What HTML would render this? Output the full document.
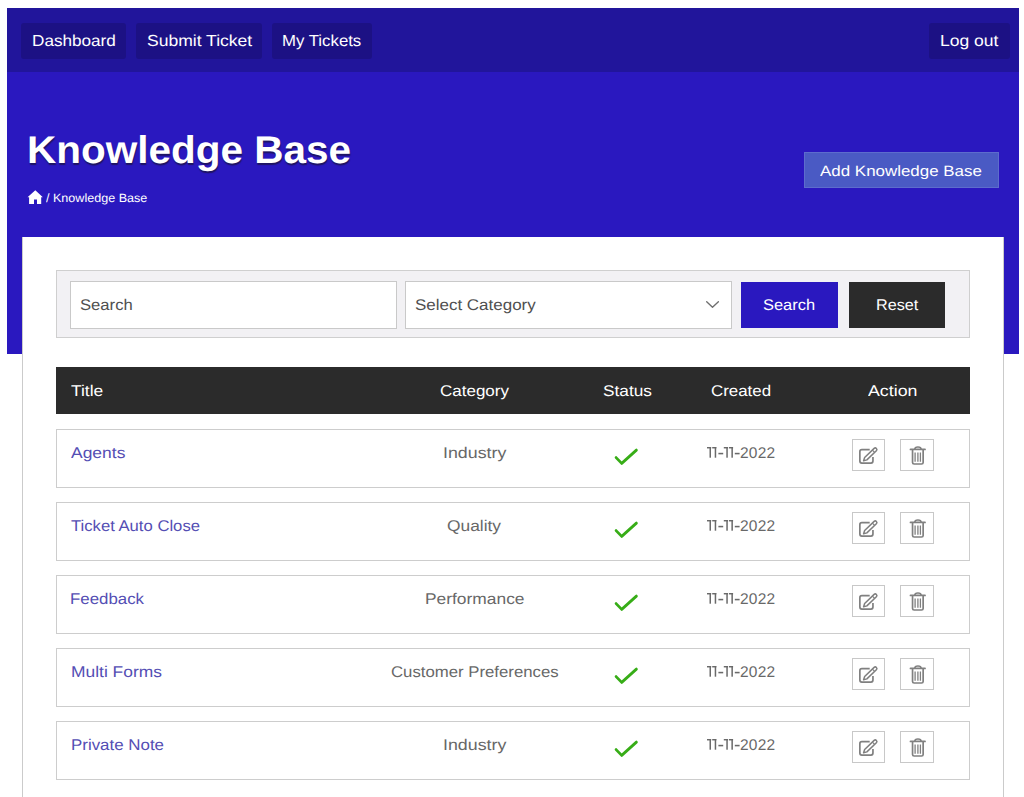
<!DOCTYPE html>
<html><head><meta charset="utf-8"><style>
*{box-sizing:border-box;margin:0;padding:0}
html,body{width:1024px;height:797px;overflow:hidden;background:#fff;font-family:"Liberation Sans",sans-serif;text-rendering:geometricPrecision}
.a{position:absolute}
.t{position:absolute;white-space:nowrap;line-height:1}
.nb{position:absolute;top:23px;height:36px;background:#1c1184;border-radius:3px}
.row{position:absolute;left:56px;width:914px;height:59px;border:1px solid #cdcdcd;background:#fff}
.ab{position:absolute;top:9px;width:33px;height:32px;border:1px solid #c8c8c8;background:#fff}
</style></head><body>
<div class="a" style="left:7px;top:8px;width:1012px;height:64px;background:#21159b"></div>
<div class="a" style="left:7px;top:72px;width:1012px;height:282px;background:#2a18bf"></div>
<div class="nb" style="left:21px;width:105px"></div>
<div class="nb" style="left:136px;width:126px"></div>
<div class="nb" style="left:272px;width:100px"></div>
<div class="nb" style="left:929px;width:81px"></div>
<svg class="a" style="left:27px;top:190px" width="17" height="15" viewBox="0 0 17 15"><path d="M8.3 0.3 L15.6 6.9 Q15.9 7.3 15.4 7.3 H14.2 V14 H10 V9.6 H7 V14 H2.1 V7.3 H0.9 Q0.4 7.3 0.8 6.9 Z" fill="#fff"/></svg>
<div class="a" style="left:804px;top:152px;width:195px;height:36px;background:#4a5ac4;border:1px solid #5d6ccd"></div>
<div class="a" style="left:22px;top:237px;width:982px;height:600px;background:#fff;border-left:1px solid #cbcbcb;border-right:1px solid #cbcbcb"></div>
<div class="a" style="left:56px;top:270px;width:914px;height:68px;background:#f2f1f4;border:1px solid #cfcfcf"></div>
<div class="a" style="left:70px;top:281px;width:327px;height:48px;background:#fff;border:1px solid #c9c9c9"></div>
<div class="a" style="left:405px;top:281px;width:327px;height:48px;background:#fff;border:1px solid #c9c9c9"></div>
<svg class="a" style="left:705px;top:300px" width="15" height="9" viewBox="0 0 15 9"><path d="M1.7 1.7 L7.5 7.2 L13.4 1.7" fill="none" stroke="#6e6e6e" stroke-width="1.35" stroke-linecap="round" stroke-linejoin="round"/></svg>
<div class="a" style="left:741px;top:282px;width:97px;height:46px;background:#2a18bf"></div>
<div class="a" style="left:849px;top:282px;width:96px;height:46px;background:#2b2b2b"></div>
<div class="a" style="left:56px;top:367px;width:913.5px;height:47px;background:#2b2b2b"></div>
<div class="row" style="top:429px">
<span class="a" style="left:557px;top:18px;line-height:0"><svg width="26" height="20" viewBox="0 0 26 20"><path d="M2.1 9.6 L7.7 15.4 L22.4 2.1" fill="none" stroke="#37ad17" stroke-width="2.8" stroke-linecap="round" stroke-linejoin="round"/></svg></span>
<span class="a" style="left:649.6px;top:17.2px;line-height:0"><svg width="34" height="12" viewBox="0 0 34 12"><rect x="0.00" y="0" width="4.2" height="1.45" fill="#6a6a6a"/><rect x="2.50" y="0" width="1.5" height="10.7" fill="#6a6a6a"/><rect x="5.20" y="0" width="4.2" height="1.45" fill="#6a6a6a"/><rect x="7.70" y="0" width="1.5" height="10.7" fill="#6a6a6a"/><rect x="11.4" y="5.8" width="4.8" height="1.55" fill="#6a6a6a"/><rect x="16.80" y="0" width="4.2" height="1.45" fill="#6a6a6a"/><rect x="19.30" y="0" width="1.5" height="10.7" fill="#6a6a6a"/><rect x="21.90" y="0" width="4.2" height="1.45" fill="#6a6a6a"/><rect x="24.40" y="0" width="1.5" height="10.7" fill="#6a6a6a"/><rect x="27.8" y="5.8" width="4.8" height="1.55" fill="#6a6a6a"/></svg></span>
<span class="t" style="left:683px;top:16.3px;font-size:15.5px;letter-spacing:.25px;color:#686868">2022</span>
<span class="ab" style="left:795px"><svg style="position:absolute;left:-1px;top:-1px" width="34" height="32" viewBox="0 0 34 32">
<path d="M17.7 10.7 H9.85 Q7.85 10.7 7.85 12.7 V22.05 Q7.85 24.05 9.85 24.05 H18.95 Q20.95 24.05 20.95 22.05 V18" fill="none" stroke="#808080" stroke-width="1.7"/>
<g transform="translate(11.6 21.8) rotate(-44)"><path d="M0 0 L3 -1.6 H16.2 A1.6 1.6 0 0 1 16.2 1.6 H3 Z" fill="none" stroke="#808080" stroke-width="1.5" stroke-linejoin="round"/><path d="M13.8 -1.6 V1.6" stroke="#808080" stroke-width="1.2"/></g>
</svg></span>
<span class="ab" style="left:843px;width:34px"><svg style="position:absolute;left:-0.2px;top:-1px" width="34" height="32" viewBox="0 0 34 32">
<path d="M9.5 10.4 H24" stroke="#808080" stroke-width="1.8" stroke-linecap="round"/>
<path d="M13.8 10.2 Q13.8 8 16.95 8 Q20.1 8 20.1 10.2" fill="none" stroke="#808080" stroke-width="1.6"/>
<path d="M11.55 10.8 V23.4 Q11.55 25 13.15 25 H20.55 Q22.15 25 22.15 23.4 V10.8" fill="none" stroke="#808080" stroke-width="1.7"/>
<path d="M14.1 13.4 V22.8 M16.9 13.4 V22.8 M19.4 13.4 V22.8" stroke="#808080" stroke-width="1.3"/>
</svg></span>
</div>
<div class="row" style="top:502px">
<span class="a" style="left:557px;top:18px;line-height:0"><svg width="26" height="20" viewBox="0 0 26 20"><path d="M2.1 9.6 L7.7 15.4 L22.4 2.1" fill="none" stroke="#37ad17" stroke-width="2.8" stroke-linecap="round" stroke-linejoin="round"/></svg></span>
<span class="a" style="left:649.6px;top:17.2px;line-height:0"><svg width="34" height="12" viewBox="0 0 34 12"><rect x="0.00" y="0" width="4.2" height="1.45" fill="#6a6a6a"/><rect x="2.50" y="0" width="1.5" height="10.7" fill="#6a6a6a"/><rect x="5.20" y="0" width="4.2" height="1.45" fill="#6a6a6a"/><rect x="7.70" y="0" width="1.5" height="10.7" fill="#6a6a6a"/><rect x="11.4" y="5.8" width="4.8" height="1.55" fill="#6a6a6a"/><rect x="16.80" y="0" width="4.2" height="1.45" fill="#6a6a6a"/><rect x="19.30" y="0" width="1.5" height="10.7" fill="#6a6a6a"/><rect x="21.90" y="0" width="4.2" height="1.45" fill="#6a6a6a"/><rect x="24.40" y="0" width="1.5" height="10.7" fill="#6a6a6a"/><rect x="27.8" y="5.8" width="4.8" height="1.55" fill="#6a6a6a"/></svg></span>
<span class="t" style="left:683px;top:16.3px;font-size:15.5px;letter-spacing:.25px;color:#686868">2022</span>
<span class="ab" style="left:795px"><svg style="position:absolute;left:-1px;top:-1px" width="34" height="32" viewBox="0 0 34 32">
<path d="M17.7 10.7 H9.85 Q7.85 10.7 7.85 12.7 V22.05 Q7.85 24.05 9.85 24.05 H18.95 Q20.95 24.05 20.95 22.05 V18" fill="none" stroke="#808080" stroke-width="1.7"/>
<g transform="translate(11.6 21.8) rotate(-44)"><path d="M0 0 L3 -1.6 H16.2 A1.6 1.6 0 0 1 16.2 1.6 H3 Z" fill="none" stroke="#808080" stroke-width="1.5" stroke-linejoin="round"/><path d="M13.8 -1.6 V1.6" stroke="#808080" stroke-width="1.2"/></g>
</svg></span>
<span class="ab" style="left:843px;width:34px"><svg style="position:absolute;left:-0.2px;top:-1px" width="34" height="32" viewBox="0 0 34 32">
<path d="M9.5 10.4 H24" stroke="#808080" stroke-width="1.8" stroke-linecap="round"/>
<path d="M13.8 10.2 Q13.8 8 16.95 8 Q20.1 8 20.1 10.2" fill="none" stroke="#808080" stroke-width="1.6"/>
<path d="M11.55 10.8 V23.4 Q11.55 25 13.15 25 H20.55 Q22.15 25 22.15 23.4 V10.8" fill="none" stroke="#808080" stroke-width="1.7"/>
<path d="M14.1 13.4 V22.8 M16.9 13.4 V22.8 M19.4 13.4 V22.8" stroke="#808080" stroke-width="1.3"/>
</svg></span>
</div>
<div class="row" style="top:575px">
<span class="a" style="left:557px;top:18px;line-height:0"><svg width="26" height="20" viewBox="0 0 26 20"><path d="M2.1 9.6 L7.7 15.4 L22.4 2.1" fill="none" stroke="#37ad17" stroke-width="2.8" stroke-linecap="round" stroke-linejoin="round"/></svg></span>
<span class="a" style="left:649.6px;top:17.2px;line-height:0"><svg width="34" height="12" viewBox="0 0 34 12"><rect x="0.00" y="0" width="4.2" height="1.45" fill="#6a6a6a"/><rect x="2.50" y="0" width="1.5" height="10.7" fill="#6a6a6a"/><rect x="5.20" y="0" width="4.2" height="1.45" fill="#6a6a6a"/><rect x="7.70" y="0" width="1.5" height="10.7" fill="#6a6a6a"/><rect x="11.4" y="5.8" width="4.8" height="1.55" fill="#6a6a6a"/><rect x="16.80" y="0" width="4.2" height="1.45" fill="#6a6a6a"/><rect x="19.30" y="0" width="1.5" height="10.7" fill="#6a6a6a"/><rect x="21.90" y="0" width="4.2" height="1.45" fill="#6a6a6a"/><rect x="24.40" y="0" width="1.5" height="10.7" fill="#6a6a6a"/><rect x="27.8" y="5.8" width="4.8" height="1.55" fill="#6a6a6a"/></svg></span>
<span class="t" style="left:683px;top:16.3px;font-size:15.5px;letter-spacing:.25px;color:#686868">2022</span>
<span class="ab" style="left:795px"><svg style="position:absolute;left:-1px;top:-1px" width="34" height="32" viewBox="0 0 34 32">
<path d="M17.7 10.7 H9.85 Q7.85 10.7 7.85 12.7 V22.05 Q7.85 24.05 9.85 24.05 H18.95 Q20.95 24.05 20.95 22.05 V18" fill="none" stroke="#808080" stroke-width="1.7"/>
<g transform="translate(11.6 21.8) rotate(-44)"><path d="M0 0 L3 -1.6 H16.2 A1.6 1.6 0 0 1 16.2 1.6 H3 Z" fill="none" stroke="#808080" stroke-width="1.5" stroke-linejoin="round"/><path d="M13.8 -1.6 V1.6" stroke="#808080" stroke-width="1.2"/></g>
</svg></span>
<span class="ab" style="left:843px;width:34px"><svg style="position:absolute;left:-0.2px;top:-1px" width="34" height="32" viewBox="0 0 34 32">
<path d="M9.5 10.4 H24" stroke="#808080" stroke-width="1.8" stroke-linecap="round"/>
<path d="M13.8 10.2 Q13.8 8 16.95 8 Q20.1 8 20.1 10.2" fill="none" stroke="#808080" stroke-width="1.6"/>
<path d="M11.55 10.8 V23.4 Q11.55 25 13.15 25 H20.55 Q22.15 25 22.15 23.4 V10.8" fill="none" stroke="#808080" stroke-width="1.7"/>
<path d="M14.1 13.4 V22.8 M16.9 13.4 V22.8 M19.4 13.4 V22.8" stroke="#808080" stroke-width="1.3"/>
</svg></span>
</div>
<div class="row" style="top:648px">
<span class="a" style="left:557px;top:18px;line-height:0"><svg width="26" height="20" viewBox="0 0 26 20"><path d="M2.1 9.6 L7.7 15.4 L22.4 2.1" fill="none" stroke="#37ad17" stroke-width="2.8" stroke-linecap="round" stroke-linejoin="round"/></svg></span>
<span class="a" style="left:649.6px;top:17.2px;line-height:0"><svg width="34" height="12" viewBox="0 0 34 12"><rect x="0.00" y="0" width="4.2" height="1.45" fill="#6a6a6a"/><rect x="2.50" y="0" width="1.5" height="10.7" fill="#6a6a6a"/><rect x="5.20" y="0" width="4.2" height="1.45" fill="#6a6a6a"/><rect x="7.70" y="0" width="1.5" height="10.7" fill="#6a6a6a"/><rect x="11.4" y="5.8" width="4.8" height="1.55" fill="#6a6a6a"/><rect x="16.80" y="0" width="4.2" height="1.45" fill="#6a6a6a"/><rect x="19.30" y="0" width="1.5" height="10.7" fill="#6a6a6a"/><rect x="21.90" y="0" width="4.2" height="1.45" fill="#6a6a6a"/><rect x="24.40" y="0" width="1.5" height="10.7" fill="#6a6a6a"/><rect x="27.8" y="5.8" width="4.8" height="1.55" fill="#6a6a6a"/></svg></span>
<span class="t" style="left:683px;top:16.3px;font-size:15.5px;letter-spacing:.25px;color:#686868">2022</span>
<span class="ab" style="left:795px"><svg style="position:absolute;left:-1px;top:-1px" width="34" height="32" viewBox="0 0 34 32">
<path d="M17.7 10.7 H9.85 Q7.85 10.7 7.85 12.7 V22.05 Q7.85 24.05 9.85 24.05 H18.95 Q20.95 24.05 20.95 22.05 V18" fill="none" stroke="#808080" stroke-width="1.7"/>
<g transform="translate(11.6 21.8) rotate(-44)"><path d="M0 0 L3 -1.6 H16.2 A1.6 1.6 0 0 1 16.2 1.6 H3 Z" fill="none" stroke="#808080" stroke-width="1.5" stroke-linejoin="round"/><path d="M13.8 -1.6 V1.6" stroke="#808080" stroke-width="1.2"/></g>
</svg></span>
<span class="ab" style="left:843px;width:34px"><svg style="position:absolute;left:-0.2px;top:-1px" width="34" height="32" viewBox="0 0 34 32">
<path d="M9.5 10.4 H24" stroke="#808080" stroke-width="1.8" stroke-linecap="round"/>
<path d="M13.8 10.2 Q13.8 8 16.95 8 Q20.1 8 20.1 10.2" fill="none" stroke="#808080" stroke-width="1.6"/>
<path d="M11.55 10.8 V23.4 Q11.55 25 13.15 25 H20.55 Q22.15 25 22.15 23.4 V10.8" fill="none" stroke="#808080" stroke-width="1.7"/>
<path d="M14.1 13.4 V22.8 M16.9 13.4 V22.8 M19.4 13.4 V22.8" stroke="#808080" stroke-width="1.3"/>
</svg></span>
</div>
<div class="row" style="top:721px">
<span class="a" style="left:557px;top:18px;line-height:0"><svg width="26" height="20" viewBox="0 0 26 20"><path d="M2.1 9.6 L7.7 15.4 L22.4 2.1" fill="none" stroke="#37ad17" stroke-width="2.8" stroke-linecap="round" stroke-linejoin="round"/></svg></span>
<span class="a" style="left:649.6px;top:17.2px;line-height:0"><svg width="34" height="12" viewBox="0 0 34 12"><rect x="0.00" y="0" width="4.2" height="1.45" fill="#6a6a6a"/><rect x="2.50" y="0" width="1.5" height="10.7" fill="#6a6a6a"/><rect x="5.20" y="0" width="4.2" height="1.45" fill="#6a6a6a"/><rect x="7.70" y="0" width="1.5" height="10.7" fill="#6a6a6a"/><rect x="11.4" y="5.8" width="4.8" height="1.55" fill="#6a6a6a"/><rect x="16.80" y="0" width="4.2" height="1.45" fill="#6a6a6a"/><rect x="19.30" y="0" width="1.5" height="10.7" fill="#6a6a6a"/><rect x="21.90" y="0" width="4.2" height="1.45" fill="#6a6a6a"/><rect x="24.40" y="0" width="1.5" height="10.7" fill="#6a6a6a"/><rect x="27.8" y="5.8" width="4.8" height="1.55" fill="#6a6a6a"/></svg></span>
<span class="t" style="left:683px;top:16.3px;font-size:15.5px;letter-spacing:.25px;color:#686868">2022</span>
<span class="ab" style="left:795px"><svg style="position:absolute;left:-1px;top:-1px" width="34" height="32" viewBox="0 0 34 32">
<path d="M17.7 10.7 H9.85 Q7.85 10.7 7.85 12.7 V22.05 Q7.85 24.05 9.85 24.05 H18.95 Q20.95 24.05 20.95 22.05 V18" fill="none" stroke="#808080" stroke-width="1.7"/>
<g transform="translate(11.6 21.8) rotate(-44)"><path d="M0 0 L3 -1.6 H16.2 A1.6 1.6 0 0 1 16.2 1.6 H3 Z" fill="none" stroke="#808080" stroke-width="1.5" stroke-linejoin="round"/><path d="M13.8 -1.6 V1.6" stroke="#808080" stroke-width="1.2"/></g>
</svg></span>
<span class="ab" style="left:843px;width:34px"><svg style="position:absolute;left:-0.2px;top:-1px" width="34" height="32" viewBox="0 0 34 32">
<path d="M9.5 10.4 H24" stroke="#808080" stroke-width="1.8" stroke-linecap="round"/>
<path d="M13.8 10.2 Q13.8 8 16.95 8 Q20.1 8 20.1 10.2" fill="none" stroke="#808080" stroke-width="1.6"/>
<path d="M11.55 10.8 V23.4 Q11.55 25 13.15 25 H20.55 Q22.15 25 22.15 23.4 V10.8" fill="none" stroke="#808080" stroke-width="1.7"/>
<path d="M14.1 13.4 V22.8 M16.9 13.4 V22.8 M19.4 13.4 V22.8" stroke="#808080" stroke-width="1.3"/>
</svg></span>
</div>
<div class="t" style="left:27.43px;top:131.45px;font-size:38.7px;transform:translateY(0.90px) scaleX(1.0469);transform-origin:0 0;color:#fff;font-weight:bold;text-shadow:0.5px 2.5px 1px rgba(30,20,90,.9)">Knowledge Base</div>
<div class="t" style="left:46.02px;top:192.05px;font-size:12px;transform:translateY(0.00px) scaleX(1.0468);transform-origin:0 0;color:#fff">/ Knowledge Base</div>
<div class="t" style="left:32.00px;top:33.66px;font-size:16px;transform:translateY(0.00px) scaleX(1.0710);transform-origin:0 0;color:#fff">Dashboard</div>
<div class="t" style="left:146.60px;top:33.66px;font-size:16px;transform:translateY(0.00px) scaleX(1.0953);transform-origin:0 0;color:#fff">Submit Ticket</div>
<div class="t" style="left:282.41px;top:33.66px;font-size:16px;transform:translateY(0.00px) scaleX(1.0490);transform-origin:0 0;color:#fff">My Tickets</div>
<div class="t" style="left:939.80px;top:33.66px;font-size:16px;transform:translateY(0.00px) scaleX(1.0940);transform-origin:0 0;color:#fff">Log out</div>
<div class="t" style="left:820.48px;top:163.94px;font-size:15px;transform:translateY(0.00px) scaleX(1.1289);transform-origin:0 0;color:#fff">Add Knowledge Base</div>
<div class="t" style="left:80.33px;top:298.10px;font-size:15.5px;transform:translateY(0.00px) scaleX(1.0732);transform-origin:0 0;color:#505050">Search</div>
<div class="t" style="left:414.80px;top:298.10px;font-size:15.5px;transform:translateY(0.00px) scaleX(1.0946);transform-origin:0 0;color:#505050">Select Category</div>
<div class="t" style="left:762.80px;top:297.90px;font-size:15.5px;transform:translateY(0.00px) scaleX(1.0600);transform-origin:0 0;color:#fff">Search</div>
<div class="t" style="left:875.56px;top:297.90px;font-size:15.5px;transform:translateY(0.00px) scaleX(1.0441);transform-origin:0 0;color:#fff">Reset</div>
<div class="t" style="left:70.57px;top:383.70px;font-size:15.5px;transform:translateY(0.00px) scaleX(1.1214);transform-origin:0 0;color:#fff">Title</div>
<div class="t" style="left:440.32px;top:383.70px;font-size:15.5px;transform:translateY(0.00px) scaleX(1.0963);transform-origin:0 0;color:#fff">Category</div>
<div class="t" style="left:602.61px;top:383.70px;font-size:15.5px;transform:translateY(0.00px) scaleX(1.1131);transform-origin:0 0;color:#fff">Status</div>
<div class="t" style="left:711.17px;top:383.70px;font-size:15.5px;transform:translateY(0.00px) scaleX(1.0895);transform-origin:0 0;color:#fff">Created</div>
<div class="t" style="left:868.00px;top:383.70px;font-size:15.5px;transform:translateY(0.00px) scaleX(1.1468);transform-origin:0 0;color:#fff">Action</div>
<div class="t" style="left:70.57px;top:446.10px;font-size:15.5px;transform:translateY(0.00px) scaleX(1.1264);transform-origin:0 0;color:#544eb4">Agents</div>
<div class="t" style="left:442.88px;top:446.10px;font-size:15.5px;transform:translateY(0.00px) scaleX(1.1485);transform-origin:0 0;color:#686868">Industry</div>
<div class="t" style="left:71.34px;top:519.10px;font-size:15.5px;transform:translateY(0.00px) scaleX(1.0744);transform-origin:0 0;color:#544eb4">Ticket Auto Close</div>
<div class="t" style="left:447.45px;top:519.10px;font-size:15.5px;transform:translateY(0.00px) scaleX(1.1203);transform-origin:0 0;color:#686868">Quality</div>
<div class="t" style="left:70.14px;top:592.10px;font-size:15.5px;transform:translateY(0.00px) scaleX(1.0867);transform-origin:0 0;color:#544eb4">Feedback</div>
<div class="t" style="left:424.95px;top:592.10px;font-size:15.5px;transform:translateY(0.00px) scaleX(1.1213);transform-origin:0 0;color:#686868">Performance</div>
<div class="t" style="left:70.64px;top:665.10px;font-size:15.5px;transform:translateY(0.00px) scaleX(1.1240);transform-origin:0 0;color:#544eb4">Multi Forms</div>
<div class="t" style="left:391.08px;top:665.10px;font-size:15.5px;transform:translateY(0.00px) scaleX(1.0812);transform-origin:0 0;color:#686868">Customer Preferences</div>
<div class="t" style="left:70.79px;top:738.10px;font-size:15.5px;transform:translateY(0.00px) scaleX(1.0907);transform-origin:0 0;color:#544eb4">Private Note</div>
<div class="t" style="left:442.88px;top:738.10px;font-size:15.5px;transform:translateY(0.00px) scaleX(1.1485);transform-origin:0 0;color:#686868">Industry</div>
</body></html>
